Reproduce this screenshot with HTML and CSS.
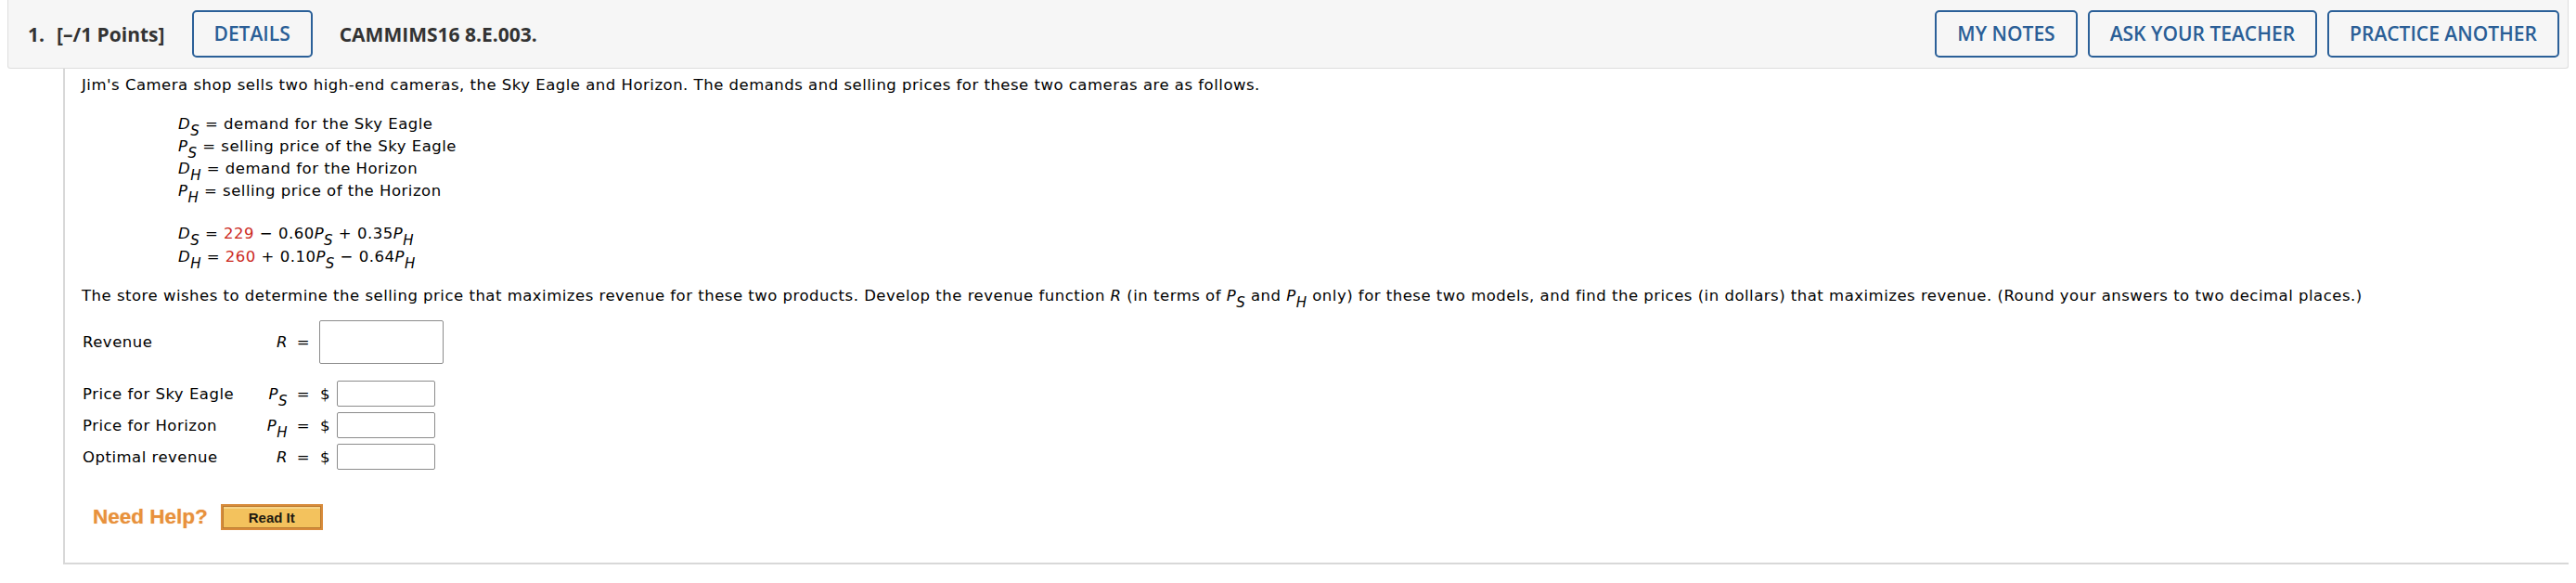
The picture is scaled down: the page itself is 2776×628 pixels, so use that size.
FILE: index.html
```html
<!DOCTYPE html>
<html lang="en">
<head>
<meta charset="utf-8">
<title>CAMMIMS16 8.E.003.</title>
<link rel="stylesheet" href="styles.css">
</head>
<body>
<header class="qhead">
  <div class="qleft">
    <span class="qnum">1.</span>
    <span class="qpts">[–/1 Points]</span>
    <button class="hbtn">DETAILS</button>
    <span class="qid">CAMMIMS16 8.E.003.</span>
  </div>
  <div class="qright">
    <button class="hbtn">MY NOTES</button>
    <button class="hbtn">ASK YOUR TEACHER</button>
    <button class="hbtn">PRACTICE ANOTHER</button>
  </div>
</header>

<section class="panel">
  <p class="intro">Jim's Camera shop sells two high-end cameras, the Sky Eagle and Horizon. The demands and selling prices for these two cameras are as follows.</p>

  <div class="defs">
    <div><i>D</i><sub>S</sub> = demand for the Sky Eagle</div>
    <div><i>P</i><sub>S</sub> = selling price of the Sky Eagle</div>
    <div><i>D</i><sub>H</sub> = demand for the Horizon</div>
    <div><i>P</i><sub>H</sub> = selling price of the Horizon</div>
  </div>

  <div class="eqs">
    <div><i>D</i><sub>S</sub> = <span class="red">229</span> − 0.60<i>P</i><sub>S</sub> + 0.35<i>P</i><sub>H</sub></div>
    <div><i>D</i><sub>H</sub> = <span class="red">260</span> + 0.10<i>P</i><sub>S</sub> − 0.64<i>P</i><sub>H</sub></div>
  </div>

  <p class="task">The store wishes to determine the selling price that maximizes revenue for these two products. Develop the revenue function <i>R</i> (in terms of <i>P</i><sub>S</sub> and <i>P</i><sub>H</sub> only) for these two models, and find the prices (in dollars) that maximizes revenue. (Round your answers to two decimal places.)</p>

  <div class="form">
    <div class="lbl rev">Revenue</div>
    <div class="var rev"><i>R</i></div>
    <div class="eq rev">=</div>
    <div class="val rev"><span class="box big"></span></div>

    <div class="lbl">Price for Sky Eagle</div>
    <div class="var"><i>P</i><sub>S</sub></div>
    <div class="eq">=</div>
    <div class="val"><span class="dol">$</span><span class="box"></span></div>

    <div class="lbl">Price for Horizon</div>
    <div class="var"><i>P</i><sub>H</sub></div>
    <div class="eq">=</div>
    <div class="val"><span class="dol">$</span><span class="box"></span></div>

    <div class="lbl">Optimal revenue</div>
    <div class="var"><i>R</i></div>
    <div class="eq">=</div>
    <div class="val"><span class="dol">$</span><span class="box"></span></div>
  </div>

  <div class="help">
    <span class="needhelp">Need Help?</span>
    <span class="readit">Read It</span>
  </div>
</section>
</body>
</html>
```

FILE: styles.css
```css
html, body {
  background: #ffffff;
}
body {
  margin: 0 8px;
  font-family: "DejaVu Sans", Verdana, sans-serif;
  color: #000;
}

.qhead {
  height: 74px;
  box-sizing: border-box;
  background: #f6f6f6;
  border: 1px solid #dedede;
  border-top: none;
  border-radius: 0 0 3px 3px;
  display: flex;
  align-items: center;
  justify-content: space-between;
  padding: 0 9px 0 21px;
  font-family: "Open Sans", sans-serif;
  font-weight: 600;
  font-size: 21px;
}
.qleft, .qright {
  display: flex;
  align-items: center;
}
.qnum, .qpts, .qid {
  color: #333;
  font-weight: 700;
}
.qnum { margin-right: 13px; }
.qpts { margin-right: 29px; }
.qid { margin-left: 29px; }
.qright { gap: 11px; }

.hbtn {
  height: 51px;
  box-sizing: border-box;
  padding: 0 22px;
  border: 2px solid #2b6098;
  border-radius: 5px;
  background: transparent;
  color: #2a5e96;
  font-family: "Open Sans", sans-serif;
  font-weight: 600;
  font-size: 21px;
  line-height: 1;
}

.panel {
  margin-left: 60px;
  border-left: 2px solid #d8d8d8;
  border-bottom: 2px solid #d8d8d8;
  padding: 6px 0 35px 18px;
  font-size: 16.5px;
  letter-spacing: 0.5px;
}

i { font-style: italic; }
sub {
  font-size: 15px;
  font-style: italic;
  vertical-align: baseline;
  position: relative;
  top: 7px;
  line-height: 0;
}

.intro {
  margin: 0;
  line-height: 24px;
}

.defs {
  margin: 18px 0 0 104px;
  line-height: 24px;
}
.eqs {
  margin: 21px 0 0 104px;
  line-height: 25px;
}
.red { color: #cc2a1e; }

.task {
  margin: 18px 0 0 0;
  line-height: 24px;
}

.form {
  margin-top: 14px;
  margin-left: 1px;
  display: grid;
  grid-template-columns: 181px 40px 34px auto;
  row-gap: 6px;
  align-items: center;
  width: max-content;
}
.form .rev { margin-bottom: 12px; }
.var { text-align: right; }
.eq { text-align: center; }
.val {
  display: flex;
  align-items: center;
}
.dol { width: 18px; padding-left: 1px; }
.box {
  display: block;
  width: 106px;
  height: 28px;
  box-sizing: border-box;
  border: 1px solid #8c8c8c;
  border-radius: 2px;
  background: #fff;
}
.box.big {
  width: 134px;
  height: 47px;
}

.help {
  margin: 37px 0 0 12px;
  display: flex;
  align-items: center;
  gap: 14px;
  letter-spacing: 0;
}
.needhelp {
  font-family: "Liberation Sans", Arial, sans-serif;
  font-weight: bold;
  font-size: 22.5px;
  color: #e8913c;
  text-shadow: 0 0 1px rgba(232, 145, 60, 0.6);
}
.readit {
  width: 110px;
  height: 28px;
  box-sizing: border-box;
  border: 2px solid #d88b3a;
  background: #f3c25d;
  box-shadow: inset 0 0 0 1px #b9782f, inset 0 2px 0 1px #f7d489;
  display: flex;
  align-items: center;
  justify-content: center;
  font-family: "Liberation Sans", Arial, sans-serif;
  font-weight: bold;
  font-size: 15px;
  color: #1e1a10;
}
```
